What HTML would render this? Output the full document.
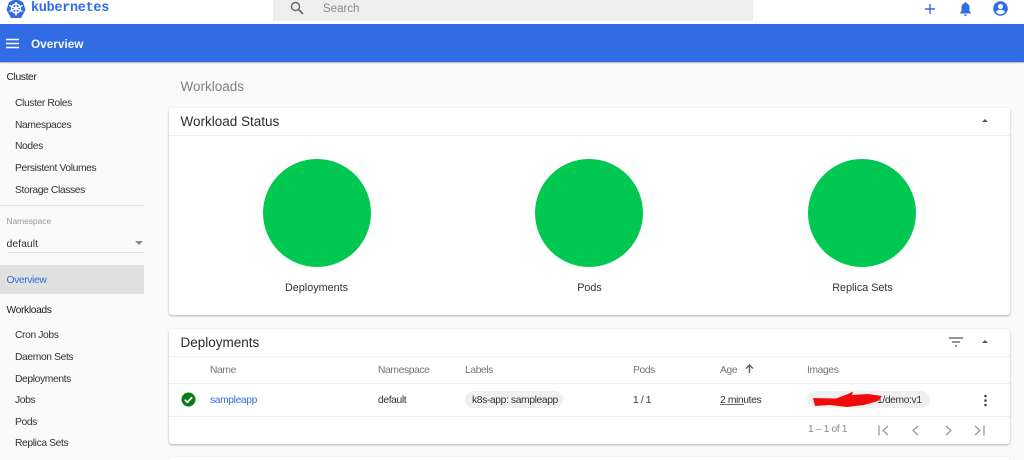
<!DOCTYPE html>
<html><head><meta charset="utf-8"><style>
html,body{margin:0;padding:0;width:1024px;height:460px;overflow:hidden}
#p{width:1024px;height:460px;overflow:hidden;position:relative;background:#fafafa;font-family:"Liberation Sans",sans-serif;color:#333}
.a,.t{position:absolute}
.t{white-space:nowrap;line-height:14px;font-size:10.3px;letter-spacing:-.38px}
.b{font-size:13.5px;letter-spacing:0;color:#2b2b2b}
.card{position:absolute;background:#fff;border-radius:3px;box-shadow:0 1px 2px rgba(0,0,0,.3)}
.l{position:absolute;background:#eee;height:1px}
.h{color:#757575}
</style></head><body><div id="p">
<div class="a" style="left:0;top:0;width:1024px;height:24px;background:#fff"></div>
<svg class="a" style="left:6px;top:0" width="20" height="19" viewBox="0 0 20 19"><path d="M10 -1 L17 2 L19.5 10 L15 18 L5 18 L.5 10 L3 2Z" fill="#326ce5"/><g stroke="#fff" fill="none" stroke-width="1.400"><circle cx="10" cy="8.500" r="4.500"/><path d="M10 2V15.500M3.500 5.500L16.500 11.500M16.500 5.500L3.500 11.500"/></g></svg>
<div class="t" style="left:31px;top:1px;font:bold 13.5px/16px 'Liberation Mono',monospace;color:#326ce5;letter-spacing:-.3px">kubernetes</div>
<div class="a" style="left:273px;top:0;width:480px;height:21px;background:#eee"></div>
<svg class="a" style="left:290px;top:1px" width="14" height="14" viewBox="0 0 14 14"><circle cx="5.500" cy="5.500" r="4" fill="none" stroke="#666" stroke-width="1.400"/><path d="M8.500 8.500L13 13" stroke="#666" stroke-width="1.600"/></svg>
<div class="t" style="left:323px;top:2px;font-size:11.500px;letter-spacing:0;color:#8a8a8a">Search</div>
<svg class="a" style="left:924px;top:3px" width="12" height="12"><path d="M6 1V11M1 6H11" stroke="#326ce5" stroke-width="1.400"/></svg>
<svg class="a" style="left:959px;top:2px" width="13" height="14" viewBox="0 0 13 14"><path d="M6.500 0C7.300 0 7.500 .6 7.500 1.200C9.500 1.800 10.500 3.500 10.500 5.500V9L12 11V11.500H1V11L2.500 9V5.500C2.500 3.500 3.500 1.800 5.500 1.200C5.500 .6 5.700 0 6.500 0Z M5 12.500H8C8 13.500 7.300 14 6.500 14S5 13.500 5 12.500Z" fill="#326ce5"/></svg>
<svg class="a" style="left:993px;top:1px" width="15" height="15" viewBox="0 0 15 15"><circle cx="7.500" cy="7.500" r="7.300" fill="#326ce5"/><circle cx="7.500" cy="5.500" r="2.500" fill="#fff"/><path d="M3 11C4 9 6 8.700 7.500 8.700S11 9 12 11C11 12.500 9.300 13.200 7.500 13.200S4 12.500 3 11Z" fill="#fff"/></svg>

<div class="a" style="left:0;top:24px;width:1024px;height:38px;background:#326ce5;box-shadow:0 1px 1px rgba(0,0,0,.3)"></div>
<svg class="a" style="left:6px;top:38px" width="13" height="11"><path d="M0 1.500H13M0 5.500H13M0 9.500H13" stroke="#fff" stroke-width="1.600"/></svg>
<div class="t" style="left:31px;top:37px;font-size:11.800px;letter-spacing:0;font-weight:bold;color:#fff;opacity:.95">Overview</div>

<!-- sidebar -->
<div class="t" style="left:6.500px;top:71px;color:#222">Cluster</div>
<div class="t" style="left:15px;top:97px">Cluster Roles</div>
<div class="t" style="left:15px;top:119px">Namespaces</div>
<div class="t" style="left:15px;top:140px">Nodes</div>
<div class="t" style="left:15px;top:162px">Persistent Volumes</div>
<div class="t" style="left:15px;top:184px">Storage Classes</div>
<div class="a" style="left:0;top:205px;width:144px;height:1px;background:#e5e5e5"></div>
<div class="t" style="left:6.500px;top:214px;font-size:8.500px;letter-spacing:-.1px;color:#999">Namespace</div>
<div class="t" style="left:6.500px;top:237px;font-size:10.500px;letter-spacing:0">default</div>
<div class="a" style="left:135px;top:241px;width:0;height:0;border:4px solid transparent;border-top:4px solid #8a8a8a;border-bottom:0"></div>
<div class="a" style="left:7px;top:252px;width:137px;height:1px;background:#e2e2e2"></div>
<div class="a" style="left:0;top:265px;width:144px;height:29px;background:#e0e0e0"></div>
<div class="t" style="left:6.500px;top:274px;color:#326ce5">Overview</div>
<div class="t" style="left:6.500px;top:304px;color:#222">Workloads</div>
<div class="t" style="left:15px;top:329px">Cron Jobs</div>
<div class="t" style="left:15px;top:351px">Daemon Sets</div>
<div class="t" style="left:15px;top:373px">Deployments</div>
<div class="t" style="left:15px;top:394px">Jobs</div>
<div class="t" style="left:15px;top:416px">Pods</div>
<div class="t" style="left:15px;top:437px">Replica Sets</div>

<!-- main -->
<div class="t b" style="left:180.500px;top:80px;color:#808080">Workloads</div>
<div class="card" style="left:169px;top:108px;width:841px;height:207px"></div>
<div class="t b" style="left:180.500px;top:115px">Workload Status</div>
<div class="l" style="left:169px;top:135px;width:841px"></div>
<div class="a" style="left:982px;top:119px;width:0;height:0;border:3.500px solid transparent;border-bottom:3.500px solid #555;border-top:0"></div>
<div class="a" style="left:263px;top:159px;width:108px;height:108px;border-radius:50%;background:#00c851"></div>
<div class="a" style="left:535px;top:159px;width:108px;height:108px;border-radius:50%;background:#00c851"></div>
<div class="a" style="left:808px;top:159px;width:108px;height:108px;border-radius:50%;background:#00c851"></div>
<div class="t" style="left:216.500px;width:200px;text-align:center;top:281px;font-size:10.800px;letter-spacing:0">Deployments</div>
<div class="t" style="left:489.500px;width:200px;text-align:center;top:281px;font-size:10.800px;letter-spacing:0">Pods</div>
<div class="t" style="left:762.500px;width:200px;text-align:center;top:281px;font-size:10.800px;letter-spacing:0">Replica Sets</div>

<div class="card" style="left:169px;top:329px;width:841px;height:115px"></div>
<div class="t b" style="left:180.500px;top:336px">Deployments</div>
<svg class="a" style="left:949px;top:337px" width="14" height="10"><path d="M0 1H14M3 5H11M6 9H8" stroke="#555" stroke-width="1.300"/></svg>
<div class="a" style="left:982px;top:340px;width:0;height:0;border:3.500px solid transparent;border-bottom:3.500px solid #555;border-top:0"></div>
<div class="l" style="left:169px;top:356px;width:841px"></div>
<div class="t h" style="left:210px;top:364px">Name</div>
<div class="t h" style="left:378px;top:364px">Namespace</div>
<div class="t h" style="left:465px;top:364px">Labels</div>
<div class="t h" style="left:633px;top:364px">Pods</div>
<div class="t h" style="left:720px;top:364px">Age</div>
<svg class="a" style="left:745px;top:364px" width="9" height="9"><path d="M4.500 9V1.500M1 4.500L4.500 1L8 4.500" fill="none" stroke="#666" stroke-width="1.500"/></svg>
<div class="t h" style="left:807px;top:364px">Images</div>
<div class="l" style="left:169px;top:383px;width:841px"></div>
<svg class="a" style="left:181px;top:392px" width="15" height="15" viewBox="0 0 15 15"><circle cx="7.500" cy="7.500" r="7" fill="#0a7d12"/><path d="M3.800 7.700L6.300 10.200L11.200 5.200" fill="none" stroke="#fff" stroke-width="1.800"/></svg>
<div class="t" style="left:210px;top:394px;color:#326ce5">sampleapp</div>
<div class="t" style="left:378px;top:394px">default</div>
<div class="a" style="left:465px;top:391px;width:98px;height:17px;border-radius:9px;background:#f0f0f0"></div>
<div class="t" style="left:472px;top:394px">k8s-app: sampleapp</div>
<div class="t" style="left:633px;top:394px">1 / 1</div>
<div class="t" style="left:720px;top:394px">2 minutes</div>
<div class="a" style="left:720px;top:404px;width:24px;height:1px;background:#666"></div>
<div class="a" style="left:807px;top:391px;width:123px;height:17px;border-radius:9px;background:#f0f0f0"></div>
<div class="t" style="left:877px;top:394px">1/demo:v1</div>
<svg class="a" style="left:812px;top:390px" width="72" height="18" viewBox="0 0 72 18"><path d="M1 8L24 8.500L36 4L41 1.500L40 5L56 4L70 6L66 11L52 15L35 17L18 15L3 16Z" fill="#f00a0a"/></svg>
<svg class="a" style="left:983px;top:394px" width="5" height="13"><circle cx="2.500" cy="2" r="1.300" fill="#444"/><circle cx="2.500" cy="6.500" r="1.300" fill="#444"/><circle cx="2.500" cy="11" r="1.300" fill="#444"/></svg>
<div class="l" style="left:169px;top:416px;width:841px"></div>
<div class="t" style="left:808px;top:423px;color:#888">1 – 1 of 1</div>
<svg class="a" style="left:877px;top:425px" width="110" height="11" fill="none" stroke="#999" stroke-width="1.300"><path d="M2 0.500V10.500M11 1L6 5.500L11 10"/><path d="M41 1L36 5.500L41 10"/><path d="M69 1L74 5.500L69 10"/><path d="M98 1L103 5.500L98 10M107 0.500V10.500"/></svg>
<div class="card" style="left:169px;top:457px;width:841px;height:20px"></div>
</div></body></html>
